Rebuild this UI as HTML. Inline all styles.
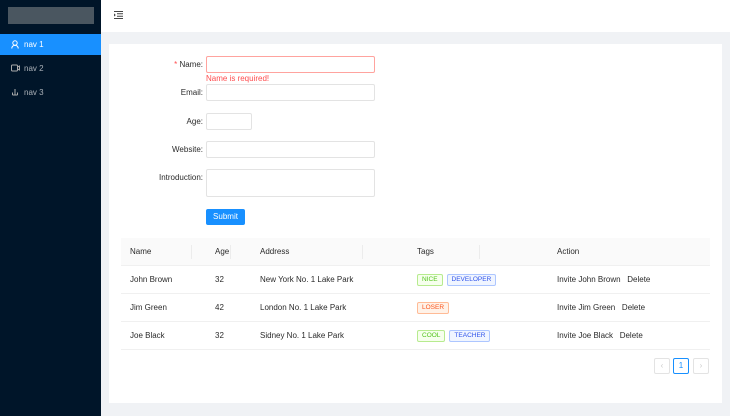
<!DOCTYPE html>
<html><head><meta charset="utf-8"><style>
*{box-sizing:border-box;margin:0;padding:0}
body{width:730px;height:416px;overflow:hidden;font-family:"Liberation Sans",sans-serif;font-size:8px;color:rgba(0,0,0,.85);background:#f0f2f5;position:relative}
.a{position:absolute}
.side{left:0;top:0;width:101px;height:416px;background:#001529}
.logo{left:8px;top:7px;width:86px;height:17px;background:#4a5660}
.nav{left:0;width:101px;height:21px;color:rgba(255,255,255,.65);line-height:21px;padding-left:24px}
.nav svg{position:absolute;left:11px;top:6px}
.sel{background:#1890ff;color:#fff}
.hdr{left:101px;top:0;width:629px;height:32px;background:#fff}
.card{left:109px;top:44px;width:613px;height:359px;background:#fff}
.lbl{width:100px;text-align:right;left:103px}
.inp{border:1px solid #e3e3e3;border-radius:2px;background:#fff;left:206px}
.th{top:238px;height:28px;left:121px;width:589px;background:#fafafa;border-bottom:1px solid #f0f0f0}
.row{left:121px;width:589px;border-bottom:1px solid #f0f0f0;height:28px}
.c{line-height:28px}
.tag{display:inline-block;height:12px;line-height:10px;font-size:6.5px;padding:0 4px;border:1px solid;border-radius:2px;margin-right:4px;vertical-align:middle}
.g{color:#52c41a;background:#f6ffed;border-color:#b7eb8f}
.b{color:#2f54eb;background:#f0f5ff;border-color:#adc6ff}
.v{color:#fa541c;background:#fff2e8;border-color:#ffbb96}
.sep{width:1px;height:14px;top:245px;background:#ececec}
.pg{top:358px;width:16px;height:16px;border:1px solid #e3e3e3;border-radius:2px;text-align:center;line-height:14px;color:#ccc;background:#fff}
</style></head><body>
<div class="a side"></div>
<div class="a logo"></div>
<div class="a nav sel" style="top:34px"><svg width="8" height="9" viewBox="0 0 8 9"><circle cx="4" cy="3" r="2.2" fill="none" stroke="#fff" stroke-width="1"/><path d="M0.7 8.5C1 6.3 2.4 5.4 4 5.4S7 6.3 7.3 8.5" fill="none" stroke="#fff" stroke-width="1"/></svg>nav 1</div>
<div class="a nav" style="top:58px"><svg width="9" height="8" viewBox="0 0 9 8"><rect x="0.5" y="1" width="6" height="6" rx="1" fill="none" stroke="#aaa" stroke-width="1"/><path d="M6.5 3L8.5 2V6L6.5 5" fill="none" stroke="#aaa" stroke-width="1"/></svg>nav 2</div>
<div class="a nav" style="top:82px"><svg width="8" height="8" viewBox="0 0 8 8"><path d="M4 1V7M1.5 7H6.5M1.5 4.5L1.5 7M6.5 4.5V7" fill="none" stroke="#aaa" stroke-width="1"/></svg>nav 3</div>
<div class="a hdr"></div>
<svg class="a" style="left:114px;top:11px" width="9" height="8" viewBox="0 0 9 8"><path d="M0 0.5H9M3 2.8H9M3 5.2H9M0 7.5H9" stroke="#444" stroke-width="1"/><path d="M0 2.4L1.8 4 0 5.6Z" fill="#444"/></svg>
<div class="a card"></div>
<div class="a lbl" style="top:60px"><span style="color:#ff4d4f">* </span>Name:</div>
<div class="a inp" style="top:56px;width:169px;height:17px;border-color:#ffa39e"></div>
<div class="a" style="left:206px;top:74px;color:#ff4d4f">Name is required!</div>
<div class="a lbl" style="top:88px">Email:</div>
<div class="a inp" style="top:84px;width:169px;height:17px"></div>
<div class="a lbl" style="top:117px">Age:</div>
<div class="a inp" style="top:113px;width:46px;height:17px"></div>
<div class="a lbl" style="top:145px">Website:</div>
<div class="a inp" style="top:141px;width:169px;height:17px"></div>
<div class="a lbl" style="top:173px">Introduction:</div>
<div class="a inp" style="top:169px;width:169px;height:28px"></div>
<div class="a" style="left:206px;top:209px;width:39px;height:16px;background:#1890ff;border-radius:2px;color:#fff;text-align:center;line-height:16px">Submit</div>
<div class="a th"></div>
<div class="a sep" style="left:191px"></div><div class="a sep" style="left:230px"></div><div class="a sep" style="left:362px"></div><div class="a sep" style="left:479px"></div>
<div class="a c" style="left:130px;top:238px">Name</div><div class="a c" style="left:215px;top:238px">Age</div><div class="a c" style="left:260px;top:238px">Address</div><div class="a c" style="left:417px;top:238px">Tags</div><div class="a c" style="left:557px;top:238px">Action</div>
<div class="a row" style="top:266px"></div><div class="a row" style="top:294px"></div><div class="a row" style="top:322px"></div>
<div class="a c" style="left:130px;top:266px">John Brown</div><div class="a c" style="left:215px;top:266px">32</div><div class="a c" style="left:260px;top:266px">New York No. 1 Lake Park</div><div class="a c" style="left:417px;top:266px"><span class="tag g">NICE</span><span class="tag b">DEVELOPER</span></div><div class="a c" style="left:557px;top:266px">Invite John Brown&nbsp;&nbsp;&nbsp;Delete</div>
<div class="a c" style="left:130px;top:294px">Jim Green</div><div class="a c" style="left:215px;top:294px">42</div><div class="a c" style="left:260px;top:294px">London No. 1 Lake Park</div><div class="a c" style="left:417px;top:294px"><span class="tag v">LOSER</span></div><div class="a c" style="left:557px;top:294px">Invite Jim Green&nbsp;&nbsp;&nbsp;Delete</div>
<div class="a c" style="left:130px;top:322px">Joe Black</div><div class="a c" style="left:215px;top:322px">32</div><div class="a c" style="left:260px;top:322px">Sidney No. 1 Lake Park</div><div class="a c" style="left:417px;top:322px"><span class="tag g">COOL</span><span class="tag b">TEACHER</span></div><div class="a c" style="left:557px;top:322px">Invite Joe Black&nbsp;&nbsp;&nbsp;Delete</div>
<div class="a pg" style="left:654px">‹</div>
<div class="a pg" style="left:673px;border-color:#1890ff;color:#1890ff">1</div>
<div class="a pg" style="left:693px">›</div>
</body></html>
